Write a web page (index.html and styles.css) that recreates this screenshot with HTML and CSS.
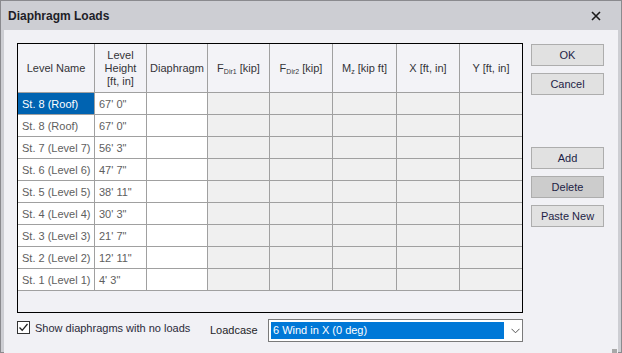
FILE: index.html
```html
<!DOCTYPE html>
<html lang="en">
<head>
    <meta charset="UTF-8">
    <title>Diaphragm Loads</title>
    <link rel="stylesheet" href="styles.css">
</head>
<body>
    <div class="window">
        <div class="titlebar">
            <span class="title">Diaphragm Loads</span>
            <span class="close">
                <svg width="10" height="10" viewBox="0 0 10 10"><path d="M1 1 L9 9 M9 1 L1 9" stroke="#1a1a1a" stroke-width="1.6"/></svg>
            </span>
        </div>

        <div class="body">
            <div class="main">
                <div class="grid-wrap">
                    <div class="grid">
                        <div class="hd"><span>Level Name</span></div>
                        <div class="hd"><span>Level<br>Height<br>[ft, in]</span></div>
                        <div class="hd"><span>Diaphragm</span></div>
                        <div class="hd"><span>F<sub>Dir1</sub> [kip]</span></div>
                        <div class="hd"><span>F<sub>Dir2</sub> [kip]</span></div>
                        <div class="hd"><span>M<sub>z</sub> [kip ft]</span></div>
                        <div class="hd"><span>X [ft, in]</span></div>
                        <div class="hd last"><span>Y [ft, in]</span></div>
                    </div>
                    <div class="grid" id="rows"></div>
                </div>

                <div class="side">
                    <button class="button">OK</button>
                    <button class="button">Cancel</button>
                    <button class="button add">Add</button>
                    <button class="button pressed">Delete</button>
                    <button class="button">Paste New</button>
                </div>
            </div>

            <div class="footer">
                <label class="check">
                    <span class="box">
                        <svg width="11" height="11" viewBox="0 0 11 11"><path d="M1.5 5.5 L4.2 8.3 L9.5 2" fill="none" stroke="#222" stroke-width="1.3"/></svg>
                    </span>
                    Show diaphragms with no loads
                </label>
                <span class="lc-label">Loadcase</span>
                <div class="select">
                    <span class="sel-value">6 Wind in X (0 deg)</span>
                    <svg class="chev" width="9" height="6" viewBox="0 0 9 6"><path d="M0.5 0.8 L4.5 4.8 L8.5 0.8" fill="none" stroke="#555" stroke-width="1"/></svg>
                </div>
            </div>

            <span class="grip"></span>
        </div>
    </div>

    <script>
        const levels = [
            ['St. 8 (Roof)', "67' 0\""],
            ['St. 8 (Roof)', "67' 0\""],
            ['St. 7 (Level 7)', "56' 3\""],
            ['St. 6 (Level 6)', "47' 7\""],
            ['St. 5 (Level 5)', "38' 11\""],
            ['St. 4 (Level 4)', "30' 3\""],
            ['St. 3 (Level 3)', "21' 7\""],
            ['St. 2 (Level 2)', "12' 11\""],
            ['St. 1 (Level 1)', "4' 3\""]
        ];

        const rows = document.getElementById('rows');
        levels.forEach((lv, i) => {
            rows.innerHTML += `
                <div class="cell${i === 0 ? ' selected' : ''}">${lv[0]}</div>
                <div class="cell">${lv[1]}</div>
                <div class="cell"></div>
                <div class="cell grey"></div>
                <div class="cell grey"></div>
                <div class="cell grey"></div>
                <div class="cell grey"></div>
                <div class="cell grey last"></div>
            `;
        });
    </script>
</body>
</html>
```

FILE: styles.css
```css
body {
    margin: 0;
    font-family: "Liberation Sans", Arial, sans-serif;
    font-size: 11px;
}

.window {
    width: 622px;
    height: 353px;
    box-sizing: border-box;
    border: 1px solid #8a8a8e;
    background: #cdced3;
    padding: 0 3px 4px 3px;
    display: flex;
    flex-direction: column;
}

.titlebar {
    height: 29px;
    flex-shrink: 0;
    display: flex;
    align-items: center;
    justify-content: space-between;
    padding: 0 17px 0 4px;
}

.title {
    font-size: 12px;
    font-weight: bold;
    color: #1e1e28;
}

.close {
    display: flex;
}

.body {
    flex: 1;
    position: relative;
    background: #f1f1f5;
    padding: 13px;
}

.main {
    display: flex;
    gap: 8px;
}

.grid-wrap {
    width: 506px;
    height: 270px;
    box-sizing: border-box;
    border: 1px solid #000;
}

.grid {
    display: grid;
    grid-template-columns: 77px 52px 61px 62px 63px 64px 63px 62px;
    grid-auto-rows: 22px;
}

.grid:first-child {
    grid-auto-rows: 49px;
}

.hd, .cell {
    box-sizing: border-box;
    border-right: 1px solid #a0a0a0;
    border-bottom: 1px solid #a0a0a0;
}

.hd {
    display: flex;
    align-items: center;
    justify-content: center;
    text-align: center;
    line-height: 13px;
    color: #333338;
    background: #f3f3f7;
    white-space: nowrap;
}

.hd sub {
    font-size: 7px;
    vertical-align: -2px;
    line-height: 0;
}

.cell {
    display: flex;
    align-items: center;
    padding-left: 4px;
    color: #5e5e5e;
    background: #fff;
    white-space: nowrap;
}

.cell.grey {
    background: #f0f0f0;
}

.cell.selected {
    background: #0063b1;
    color: #fff;
}

.hd.last, .cell.last {
    border-right: none;
}

.side {
    width: 73px;
    display: flex;
    flex-direction: column;
    gap: 7px;
    padding-top: 1px;
}

.button {
    height: 22px;
    padding: 0;
    font-family: inherit;
    font-size: 11px;
    color: #1e1e46;
    background: #e1e1e1;
    border: 1px solid #adadad;
}

.button.add {
    margin-top: 45px;
}

.button.pressed {
    background: #cccccc;
}

.footer {
    display: flex;
    margin-top: 6px;
}

.check {
    width: 193px;
    display: flex;
    align-items: center;
    gap: 5px;
    margin-top: 2px;
    height: 13px;
    color: #2a2a3a;
}

.box {
    width: 13px;
    height: 13px;
    box-sizing: border-box;
    border: 1px solid #333;
    background: #fff;
    display: flex;
    align-items: center;
    justify-content: center;
}

.lc-label {
    width: 58px;
    line-height: 23px;
    color: #1e1e28;
}

.select {
    width: 255px;
    height: 23px;
    box-sizing: border-box;
    border: 1px solid #7a7a7a;
    background: #fff;
    display: flex;
    align-items: center;
    padding: 2px;
}

.sel-value {
    width: 233px;
    height: 17px;
    line-height: 17px;
    padding-left: 2px;
    box-sizing: border-box;
    background: #0078d7;
    color: #fff;
}

.chev {
    margin-left: 7px;
}

.grip {
    position: absolute;
    right: 1px;
    bottom: 1px;
    width: 5px;
    height: 5px;
    background:
        radial-gradient(circle, #a8a8a8 0.8px, transparent 1px) 0 0 / 2px 2px;
}
```
